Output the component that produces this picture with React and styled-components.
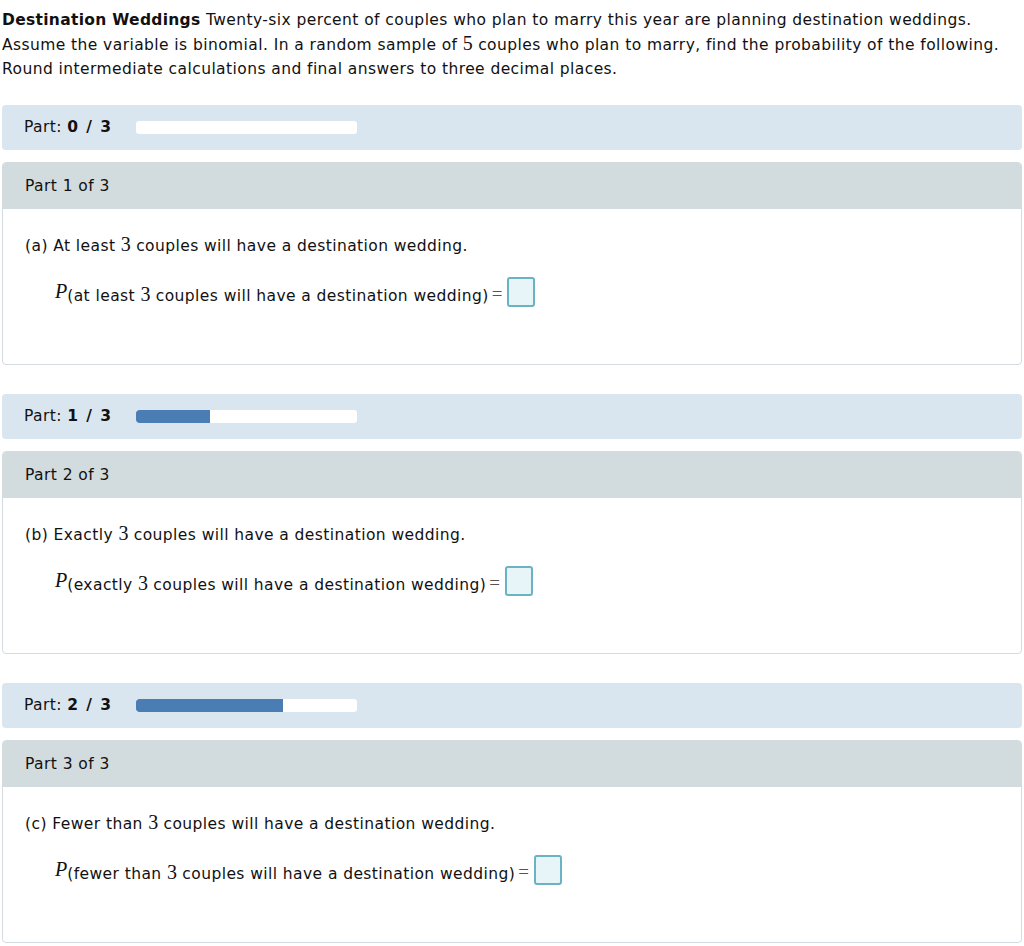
import React from "react";
import styled, { createGlobalStyle } from "styled-components";

const Global = createGlobalStyle`
  html, body { margin: 0; padding: 0; background: #fff; }
  body { font-family: "DejaVu Sans", Verdana, sans-serif; color: #111; }
`;

const Page = styled.div`
  width: 1024px;
  padding: 8px 2px 0 2px;
  box-sizing: border-box;
`;

const Intro = styled.p`
  margin: 0 0 23px 0;
  font-size: 15.5px;
  letter-spacing: 0.42px;
  line-height: 24.5px;
`;

const Title = styled.b`
  font-weight: bold;
  letter-spacing: 0.3px;
`;

const Num = styled.span`
  font-family: "Liberation Serif", "Times New Roman", serif;
  font-size: 20px;
  line-height: 1;
  letter-spacing: 0;
`;

const PVar = styled.span`
  font-family: "Liberation Serif", "Times New Roman", serif;
  font-style: italic;
  font-size: 20px;
  letter-spacing: 0;
`;

const PartBar = styled.div`
  height: 45px;
  background: #dae6ef;
  border-radius: 4px;
  display: flex;
  align-items: center;
  padding-left: 22px;
  margin-bottom: 12px;
  font-size: 15.5px;
  letter-spacing: 0.42px;
`;

const PartLabel = styled.span`
  width: 112px;
  b { font-weight: bold; word-spacing: 2px; }
`;

const Track = styled.div`
  width: 221px;
  height: 13px;
  background: #fff;
  border-radius: 3px;
  overflow: hidden;
  display: flex;
`;

const Fill = styled.div`
  height: 100%;
  background: #4a7db3;
  border-radius: 3px 0 0 3px;
`;

const Card = styled.div`
  border: 1px solid #d3dbde;
  border-radius: 4px;
  overflow: hidden;
  margin-bottom: 29px;
  &:last-child { margin-bottom: 0; }
`;

const CardHeader = styled.div`
  height: 46px;
  background: #d2dbde;
  display: flex;
  align-items: center;
  padding-left: 22px;
  font-size: 15.5px;
  letter-spacing: 0.42px;
`;

const CardBody = styled.div`
  padding: 25px 22px 57px 22px;
  font-size: 15.5px;
  letter-spacing: 0.42px;
`;

const Question = styled.div`
  line-height: 24px;
  height: 24px;
`;

const AnswerRow = styled.div`
  margin-top: 19px;
  margin-left: 30px;
  display: flex;
  align-items: center;
  height: 30px;
`;

const AnswerText = styled.span`
  padding-top: 5px;
`;

const Eq = styled.span`
  font-family: "Liberation Serif", "Times New Roman", serif;
  font-size: 19px;
  color: #555;
  letter-spacing: 0;
  margin: 4px 5px 0 3px;
`;

const InputBox = styled.div`
  width: 24px;
  height: 26px;
  border: 2px solid #6ab3c2;
  border-radius: 3px;
  background: #e7f4f8;
`;

const parts = [
  { letter: "a", phrase: "At least", lower: "at least", done: 0 },
  { letter: "b", phrase: "Exactly", lower: "exactly", done: 1 },
  { letter: "c", phrase: "Fewer than", lower: "fewer than", done: 2 },
];

export default function App() {
  return (
    <>
      <Global />
      <Page>
        <Intro>
          <Title>Destination Weddings</Title> Twenty-six percent of couples who plan to marry this year are planning destination weddings.
          <br />
          Assume the variable is binomial. In a random sample of <Num>5</Num> couples who plan to marry, find the probability of the following.
          <br />
          Round intermediate calculations and final answers to three decimal places.
        </Intro>
        {parts.map((p, i) => (
          <React.Fragment key={p.letter}>
            <PartBar>
              <PartLabel>
                Part: <b>{p.done} / 3</b>
              </PartLabel>
              <Track>
                <Fill style={{ width: `${(p.done / 3) * 100}%` }} />
              </Track>
            </PartBar>
            <Card>
              <CardHeader>Part {i + 1} of 3</CardHeader>
              <CardBody>
                <Question>
                  ({p.letter}) {p.phrase} <Num>3</Num> couples will have a destination wedding.
                </Question>
                <AnswerRow>
                  <PVar>P</PVar>
                  <AnswerText>
                    ({p.lower} <Num>3</Num> couples will have a destination wedding)
                  </AnswerText>
                  <Eq>=</Eq>
                  <InputBox />
                </AnswerRow>
              </CardBody>
            </Card>
          </React.Fragment>
        ))}
      </Page>
    </>
  );
}
